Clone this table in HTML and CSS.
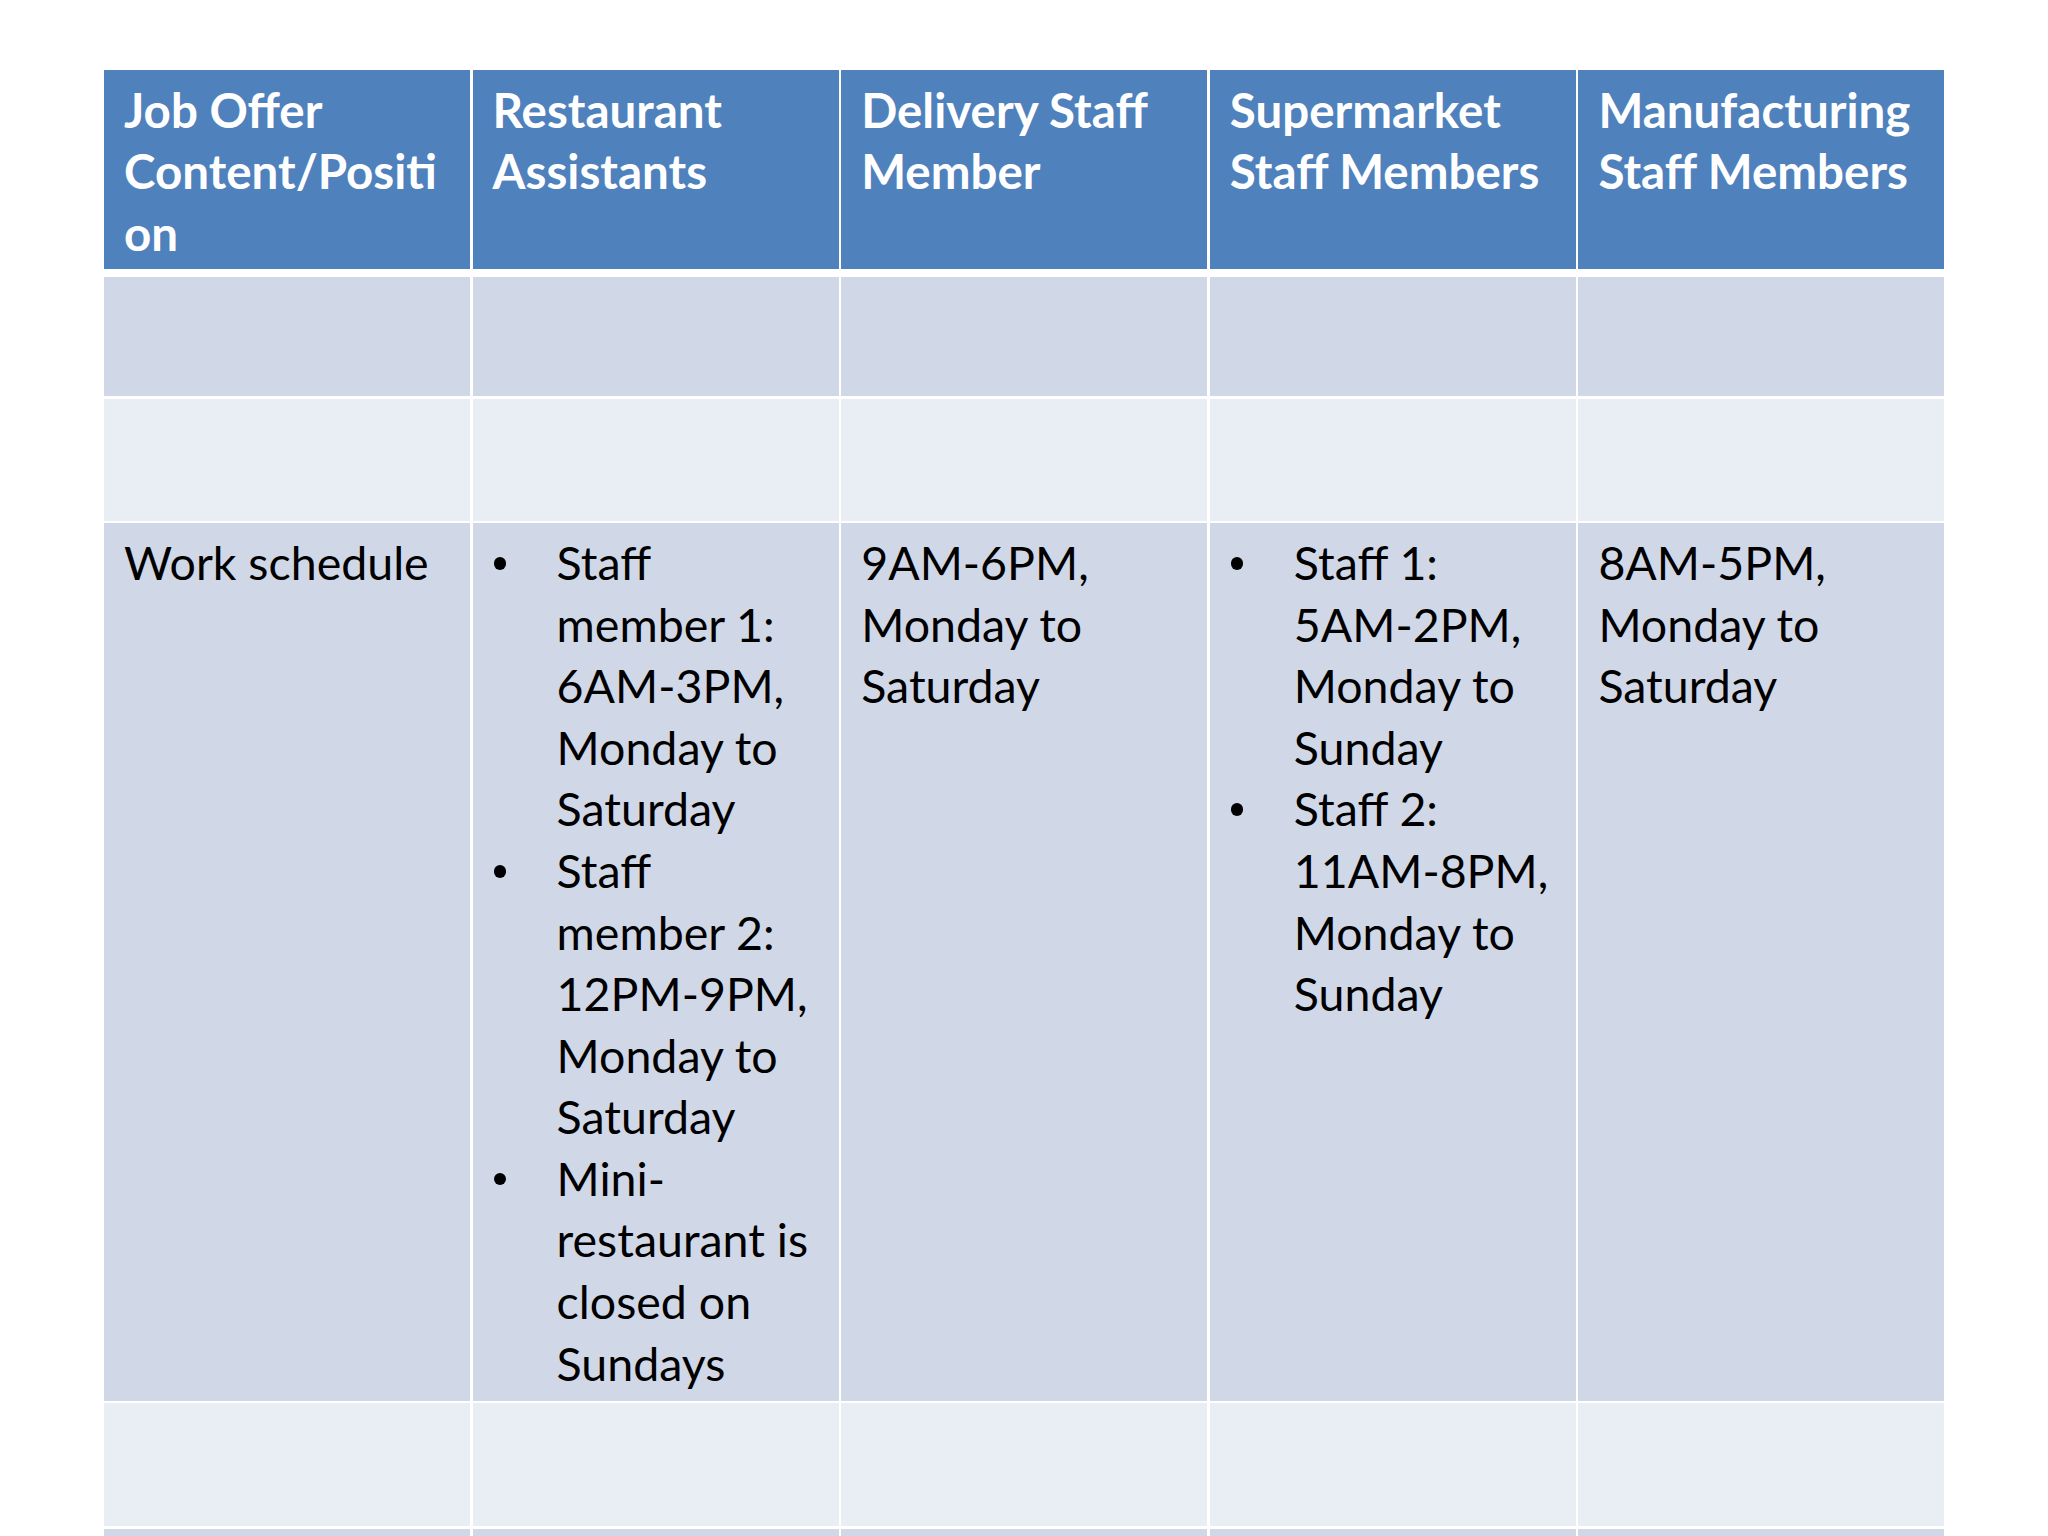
FILE: index.html
```html
<!DOCTYPE html>
<html lang="en">
<head>
<meta charset="utf-8">
<title>Job offers</title>
<link rel="stylesheet" href="styles.css">
</head>
<body>
<div class="table">
  <div class="row head">
    <div class="cell">Job Offer<br>Content/Positi<br>on</div>
    <div class="cell">Restaurant<br>Assistants</div>
    <div class="cell">Delivery Staff<br>Member</div>
    <div class="cell">Supermarket<br>Staff Members</div>
    <div class="cell">Manufacturing<br>Staff Members</div>
  </div>
  <div class="row dark r1">
    <div class="cell"></div><div class="cell"></div><div class="cell"></div><div class="cell"></div><div class="cell"></div>
  </div>
  <div class="row light r2">
    <div class="cell"></div><div class="cell"></div><div class="cell"></div><div class="cell"></div><div class="cell"></div>
  </div>
  <div class="row dark sched">
    <div class="cell">Work schedule</div>
    <div class="cell">
      <ul class="bullets">
        <li>Staff<br>member 1:<br>6AM-3PM,<br>Monday to<br>Saturday</li>
        <li>Staff<br>member 2:<br>12PM-9PM,<br>Monday to<br>Saturday</li>
        <li>Mini-<br>restaurant is<br>closed on<br>Sundays</li>
      </ul>
    </div>
    <div class="cell">9AM-6PM,<br>Monday to<br>Saturday</div>
    <div class="cell">
      <ul class="bullets">
        <li>Staff 1:<br>5AM-2PM,<br>Monday to<br>Sunday</li>
        <li>Staff 2:<br>11AM-8PM,<br>Monday to<br>Sunday</li>
      </ul>
    </div>
    <div class="cell">8AM-5PM,<br>Monday to<br>Saturday</div>
  </div>
  <div class="row light r4">
    <div class="cell"></div><div class="cell"></div><div class="cell"></div><div class="cell"></div><div class="cell"></div>
  </div>
  <div class="row dark r5">
    <div class="cell"></div><div class="cell"></div><div class="cell"></div><div class="cell"></div><div class="cell"></div>
  </div>
</div>
</body>
</html>
```
FILE: styles.css
```css
html, body {
  margin: 0;
  padding: 0;
}

body {
  width: 2048px;
  height: 1536px;
  overflow: hidden;
  background: #ffffff;
  font-family: Lato, "Liberation Sans", sans-serif;
  color: #000000;
}

.table {
  display: flex;
  flex-direction: column;
  gap: 2.7px;
  padding: 69.5px 0 0 104px;
}

.row {
  display: grid;
  grid-template-columns: repeat(5, 366px);
  column-gap: 2.6px;
}

.cell {
  padding: 8.6px 20px 0 20px;
  font-size: 46.5px;
  line-height: 61.6px;
  white-space: nowrap;
}

.head {
  height: 199px;
  margin-bottom: 5.8px;
}

.head .cell {
  padding-top: 9px;
  font-size: 47.5px;
  background: #4f81bd;
  color: #ffffff;
  font-weight: 700;
}

.dark .cell {
  background: #d0d8e8;
}

.light .cell {
  background: #e9edf4;
}

.r1 { height: 119px; }
.r2 { height: 122px; }
.sched { height: 877.4px; }
.r4 { height: 123px; }
.r5 { height: 6px; }

.bullets {
  list-style: none;
  margin: 0;
  padding: 0;
}

.bullets li {
  display: grid;
  grid-template-columns: 64px auto;
}

.bullets li::before {
  content: "";
  width: 12.6px;
  height: 12.6px;
  border-radius: 50%;
  background: #000000;
  margin: 25px 0 0 1px;
}
```
